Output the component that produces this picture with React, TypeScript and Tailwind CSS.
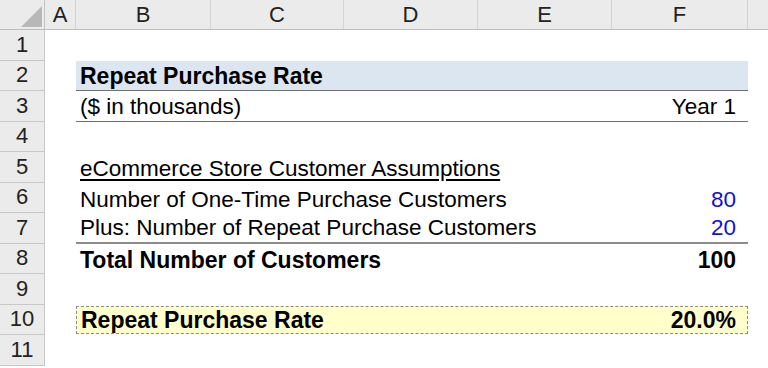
const cols = ["A", "B", "C", "D", "E", "F"];
const colWidths = ["w-[31px]", "w-[135px]", "w-[133px]", "w-[134px]", "w-[134px]", "w-[136px]"];

type Row = {
  label?: string;
  value?: string;
  kind?: "title" | "sub" | "section" | "input" | "total" | "result";
  border?: boolean;
};

const rows: Row[] = [
  {},
  { label: "Repeat Purchase Rate", kind: "title" },
  { label: "($ in thousands)", value: "Year 1", kind: "sub" },
  {},
  { label: "eCommerce Store Customer Assumptions", kind: "section" },
  { label: "Number of One-Time Purchase Customers", value: "80", kind: "input" },
  { label: "Plus: Number of Repeat Purchase Customers", value: "20", kind: "input", border: true },
  { label: "Total Number of Customers", value: "100", kind: "total" },
  {},
  { label: "Repeat Purchase Rate", value: "20.0%", kind: "result" },
  {},
];

function Cells({ row }: { row: Row }) {
  if (row.kind === "result") {
    return (
      <div className="w-[672px] h-full flex items-center py-[1px]">
        <div className="w-full h-full flex items-end justify-between bg-[#ffffcc] border border-dashed border-[#8a8a8a] pl-[4px] pr-[11px] pb-[1px] font-bold text-[23px]">
          <span>{row.label}</span>
          <span>{row.value}</span>
        </div>
      </div>
    );
  }
  let cls = "w-[672px] h-full flex items-end justify-between pl-[4px] pr-[12px] pb-[2px]";
  if (row.kind === "title") cls += " bg-[#dce6f1] border-b border-[#6f6f6f] font-bold text-[23px]";
  if (row.kind === "sub") cls += " border-b border-[#6f6f6f]";
  if (row.border) cls += " border-b-2 border-[#8c8c8c]";
  if (row.kind === "total") cls += " font-bold text-[23px]";
  return (
    <div className={cls}>
      <span className={row.kind === "section" ? "underline underline-offset-[3px]" : ""}>{row.label}</span>
      {row.value && (
        <span className={row.kind === "input" ? "text-[#1010d8]" : ""}>{row.value}</span>
      )}
    </div>
  );
}

export default function App() {
  return (
    <div
      className="w-[768px] h-[368px] bg-white overflow-hidden text-[22.5px] leading-none text-black"
      style={{ fontFamily: '"Liberation Sans", Arial, sans-serif' }}
    >
      {/* column headers */}
      <div className="flex h-[30px] bg-[#ebebeb] border-b border-[#bdbdbd] text-[22px]">
        <div className="w-[45px] h-full relative border-r border-[#c4c4c4]">
          <svg className="absolute inset-0" width="45" height="30" viewBox="0 0 45 30">
            <polygon points="21,27 42,6 42,27" fill="#b8b8b8" />
          </svg>
        </div>
        {cols.map((c, i) => (
          <div
            key={c}
            className={`${colWidths[i]} h-full flex items-center justify-center border-r border-[#d4d4d4] text-[#222]`}
          >
            {c}
          </div>
        ))}
        <div className="flex-1 h-full" />
      </div>

      {rows.map((row, i) => (
        <div key={i} className="flex h-[30.5px]">
          <div className="w-[45px] h-full flex items-center justify-center bg-[#ebebeb] border-r border-b border-[#c8c8c8] text-[#222] text-[22px]">
            {i + 1}
          </div>
          <div className="w-[31px] h-full" />
          <Cells row={row} />
          <div className="flex-1 h-full" />
        </div>
      ))}
    </div>
  );
}
